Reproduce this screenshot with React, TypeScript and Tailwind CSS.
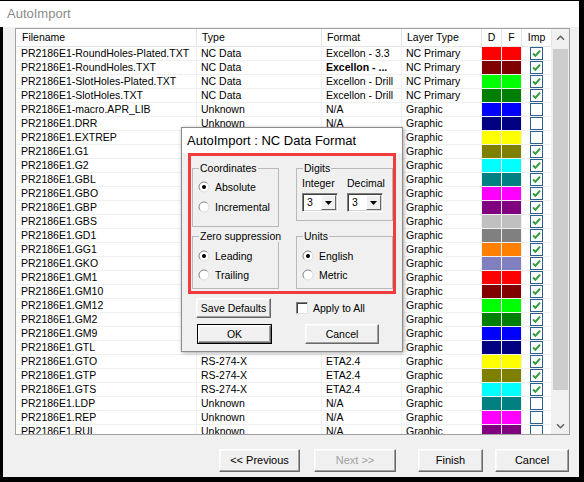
import React from 'react';

type Row = { f: string; t: string; fm: string; lt: string; c: string; imp: boolean; bold?: boolean };

const rows: Row[] = [
  { f: 'PR2186E1-RoundHoles-Plated.TXT', t: 'NC Data', fm: 'Excellon - 3.3', lt: 'NC Primary', c: '#ff0000', imp: true },
  { f: 'PR2186E1-RoundHoles.TXT', t: 'NC Data', fm: 'Excellon - ...', lt: 'NC Primary', c: '#800000', imp: true, bold: true },
  { f: 'PR2186E1-SlotHoles-Plated.TXT', t: 'NC Data', fm: 'Excellon - Drill', lt: 'NC Primary', c: '#00ff00', imp: true },
  { f: 'PR2186E1-SlotHoles.TXT', t: 'NC Data', fm: 'Excellon - Drill', lt: 'NC Primary', c: '#008000', imp: true },
  { f: 'PR2186E1-macro.APR_LIB', t: 'Unknown', fm: 'N/A', lt: 'Graphic', c: '#0000ff', imp: false },
  { f: 'PR2186E1.DRR', t: 'Unknown', fm: 'N/A', lt: 'Graphic', c: '#000080', imp: false },
  { f: 'PR2186E1.EXTREP', t: 'Unknown', fm: 'N/A', lt: 'Graphic', c: '#ffff00', imp: false },
  { f: 'PR2186E1.G1', t: 'RS-274-X', fm: 'ETA2.4', lt: 'Graphic', c: '#808000', imp: true },
  { f: 'PR2186E1.G2', t: 'RS-274-X', fm: 'ETA2.4', lt: 'Graphic', c: '#00ffff', imp: true },
  { f: 'PR2186E1.GBL', t: 'RS-274-X', fm: 'ETA2.4', lt: 'Graphic', c: '#008080', imp: true },
  { f: 'PR2186E1.GBO', t: 'RS-274-X', fm: 'ETA2.4', lt: 'Graphic', c: '#ff00ff', imp: true },
  { f: 'PR2186E1.GBP', t: 'RS-274-X', fm: 'ETA2.4', lt: 'Graphic', c: '#800080', imp: true },
  { f: 'PR2186E1.GBS', t: 'RS-274-X', fm: 'ETA2.4', lt: 'Graphic', c: '#c0c0c0', imp: true },
  { f: 'PR2186E1.GD1', t: 'RS-274-X', fm: 'ETA2.4', lt: 'Graphic', c: '#808080', imp: true },
  { f: 'PR2186E1.GG1', t: 'RS-274-X', fm: 'ETA2.4', lt: 'Graphic', c: '#ff8000', imp: true },
  { f: 'PR2186E1.GKO', t: 'RS-274-X', fm: 'ETA2.4', lt: 'Graphic', c: '#8080c0', imp: true },
  { f: 'PR2186E1.GM1', t: 'RS-274-X', fm: 'ETA2.4', lt: 'Graphic', c: '#ff0000', imp: true },
  { f: 'PR2186E1.GM10', t: 'RS-274-X', fm: 'ETA2.4', lt: 'Graphic', c: '#800000', imp: true },
  { f: 'PR2186E1.GM12', t: 'RS-274-X', fm: 'ETA2.4', lt: 'Graphic', c: '#00ff00', imp: true },
  { f: 'PR2186E1.GM2', t: 'RS-274-X', fm: 'ETA2.4', lt: 'Graphic', c: '#008000', imp: true },
  { f: 'PR2186E1.GM9', t: 'RS-274-X', fm: 'ETA2.4', lt: 'Graphic', c: '#0000ff', imp: true },
  { f: 'PR2186E1.GTL', t: 'RS-274-X', fm: 'ETA2.4', lt: 'Graphic', c: '#000080', imp: true },
  { f: 'PR2186E1.GTO', t: 'RS-274-X', fm: 'ETA2.4', lt: 'Graphic', c: '#ffff00', imp: true },
  { f: 'PR2186E1.GTP', t: 'RS-274-X', fm: 'ETA2.4', lt: 'Graphic', c: '#808000', imp: true },
  { f: 'PR2186E1.GTS', t: 'RS-274-X', fm: 'ETA2.4', lt: 'Graphic', c: '#00ffff', imp: true },
  { f: 'PR2186E1.LDP', t: 'Unknown', fm: 'N/A', lt: 'Graphic', c: '#008080', imp: false },
  { f: 'PR2186E1.REP', t: 'Unknown', fm: 'N/A', lt: 'Graphic', c: '#ff00ff', imp: false },
  { f: 'PR2186E1.RUI', t: 'Unknown', fm: 'N/A', lt: 'Graphic', c: '#800080', imp: false },
];

const btn3d =
  'flex items-center justify-center whitespace-nowrap bg-[#f0f0f0] border border-t-white border-l-white border-b-[#696969] border-r-[#696969] shadow-[inset_-1px_-1px_0_#a0a0a0,inset_1px_1px_0_#f8f8f8]';

function Chevron({ down }: { down?: boolean }) {
  return (
    <svg width="9" height="6" viewBox="0 0 9 6">
      <path
        d={down ? 'M1 1.2 L4.5 4.7 L8 1.2' : 'M1 4.8 L4.5 1.3 L8 4.8'}
        stroke="#606060"
        strokeWidth="1.5"
        fill="none"
      />
    </svg>
  );
}

function ImpBox({ on }: { on: boolean }) {
  return (
    <div className="w-[13px] h-[13px] border border-[#2f5f91] bg-white flex items-center justify-center">
      {on && (
        <svg width="11" height="11" viewBox="0 0 11 11">
          <path d="M2 5.3 L4.4 7.8 L9 2.6" stroke="#2f9a35" strokeWidth="1.9" fill="none" />
        </svg>
      )}
    </div>
  );
}

function ListBox() {
  return (
    <div className="ml-[12px] mt-px w-[555px] h-[407px] border border-[#a0a0a0] bg-white flex overflow-hidden text-[10.5px] leading-none">
      <div className="w-[536px] flex flex-col">
        <div className="h-[18px] shrink-0 flex border-b border-[#e5e5e5]">
          <div className="w-[181px] border-r border-[#e5e5e5] flex items-center pl-[6px]">Filename</div>
          <div className="w-[125px] border-r border-[#e5e5e5] flex items-center pl-[5px]">Type</div>
          <div className="w-[80px] border-r border-[#e5e5e5] flex items-center pl-[5px]">Format</div>
          <div className="w-[80px] border-r border-[#e5e5e5] flex items-center pl-[5px]">Layer Type</div>
          <div className="w-[20px] border-r border-[#e5e5e5] flex items-center justify-center">D</div>
          <div className="w-[20px] border-r border-[#e5e5e5] flex items-center justify-center">F</div>
          <div className="w-[30px] border-r border-[#e5e5e5] flex items-center justify-center">Imp</div>
        </div>
        {rows.map((r) => (
          <div key={r.f} className="h-[14px] shrink-0 flex border-b border-[#f0f0f0]">
            <div className="w-[181px] border-r border-[#f0f0f0] flex items-center pl-[5px] whitespace-nowrap">{r.f}</div>
            <div className="w-[125px] border-r border-[#f0f0f0] flex items-center pl-[4px] whitespace-nowrap">{r.t}</div>
            <div className={`w-[80px] border-r border-[#f0f0f0] flex items-center pl-[4px] whitespace-nowrap ${r.bold ? 'font-bold' : ''}`}>{r.fm}</div>
            <div className="w-[80px] border-r border-[#f0f0f0] flex items-center pl-[4px] whitespace-nowrap">{r.lt}</div>
            <div className="w-[20px] border-r border-[#f0f0f0]" style={{ backgroundColor: r.c }} />
            <div className="w-[20px] border-r border-[#f0f0f0]" style={{ backgroundColor: r.c }} />
            <div className="w-[30px] border-r border-[#f0f0f0] flex items-center justify-center">
              <ImpBox on={r.imp} />
            </div>
          </div>
        ))}
      </div>
      <div className="w-[17px] bg-[#f0f0f0] flex flex-col">
        <div className="h-[17px] shrink-0 flex items-center justify-center">
          <Chevron />
        </div>
        <div className="mt-[3px] mx-[1px] h-[341px] bg-[#cdcdcd]" />
        <div className="flex-1" />
        <div className="h-[17px] shrink-0 flex items-center justify-center">
          <Chevron down />
        </div>
      </div>
    </div>
  );
}

function Radio({ on, label }: { on: boolean; label: string }) {
  return (
    <div className="h-[14px] flex items-center whitespace-nowrap">
      <svg width="12" height="12" viewBox="0 0 12 12" className="shrink-0">
        <circle cx="6" cy="6" r="5" fill="#fff" />
        <path d="M2.46 9.54 A5 5 0 0 1 9.54 2.46" stroke="#808080" strokeWidth="1" fill="none" />
        <path d="M9.54 2.46 A5 5 0 0 1 2.46 9.54" stroke="#dcdcdc" strokeWidth="1" fill="none" />
        {on && <circle cx="6" cy="6" r="2" fill="#000" />}
      </svg>
      <span className="ml-[5px]">{label}</span>
    </div>
  );
}

function Combo() {
  return (
    <div className="w-[36px] h-[19px] flex border border-t-[#808080] border-l-[#808080] border-b-white border-r-white shadow-[inset_1px_1px_0_#404040,inset_-1px_-1px_0_#d4d4d4] bg-white p-[1px]">
      <div className="flex-1 flex items-center pl-[3px]">3</div>
      <div className="w-[15px] flex items-center justify-center bg-[#f0f0f0] border border-t-white border-l-white border-b-[#696969] border-r-[#696969]">
        <svg width="7" height="4" viewBox="0 0 7 4">
          <path d="M0 0 L7 0 L3.5 4 Z" fill="#000" />
        </svg>
      </div>
    </div>
  );
}

const legendCls = 'ml-[6px] px-px leading-[12px] whitespace-nowrap';

function Dialog() {
  return (
    <div className="absolute left-[181px] top-[127px] w-[222px] h-[225px] border border-[#8c8c8c] bg-[#f0f0f0] shadow-[1px_1px_4px_rgba(0,0,0,0.35)] flex flex-col text-[10.5px] leading-none">
      <div className="h-[25px] shrink-0 bg-white flex items-center pl-[5px] text-[13px] whitespace-nowrap">AutoImport : NC Data Format</div>
      <div className="ml-[6px] w-[208px] h-[141px] shrink-0 border-[3px] border-[#f03c3c] pt-[6px] pl-[1px] flex gap-[17px]">
        <div className="w-[87px] flex flex-col gap-[3px]">
          <fieldset className="h-[65px] min-w-0 border border-[#b9b9b9]">
            <legend className={legendCls}>Coordinates</legend>
            <div className="mt-[6px] pl-[5px] flex flex-col gap-[6px]">
              <Radio on label="Absolute" />
              <Radio on={false} label="Incremental" />
            </div>
          </fieldset>
          <fieldset className="h-[59px] min-w-0 border border-[#b9b9b9]">
            <legend className={legendCls}>Zero suppression</legend>
            <div className="mt-[7px] pl-[5px] flex flex-col gap-[5px]">
              <Radio on label="Leading" />
              <Radio on={false} label="Trailing" />
            </div>
          </fieldset>
        </div>
        <div className="w-[97px] flex flex-col gap-[9px]">
          <fieldset className="h-[59px] min-w-0 border border-[#b9b9b9]">
            <legend className={legendCls}>Digits</legend>
            <div className="mt-[3px] pl-[5px] flex gap-[9px]">
              <div className="flex flex-col gap-[4px]">
                <div className="h-[12px] flex items-center">Integer</div>
                <Combo />
              </div>
              <div className="flex flex-col gap-[4px]">
                <div className="h-[12px] flex items-center">Decimal</div>
                <Combo />
              </div>
            </div>
          </fieldset>
          <fieldset className="h-[59px] min-w-0 border border-[#b9b9b9]">
            <legend className={legendCls}>Units</legend>
            <div className="mt-[7px] pl-[5px] flex flex-col gap-[5px]">
              <Radio on label="English" />
              <Radio on={false} label="Metric" />
            </div>
          </fieldset>
        </div>
      </div>
      <div className="mt-[4px] pl-[14px] flex items-center">
        <div className={`w-[75px] h-[20px] ${btn3d}`}>Save Defaults</div>
        <div className="ml-[25px] w-[12px] h-[12px] bg-white border border-t-[#808080] border-l-[#808080] border-b-[#e3e3e3] border-r-[#e3e3e3] shadow-[inset_1px_1px_0_#404040]" />
        <span className="ml-[5px] whitespace-nowrap">Apply to All</span>
      </div>
      <div className="mt-[6px] pl-[15px] flex items-center">
        <div className="w-[75px] h-[20px] border border-black">
          <div className={`w-full h-full ${btn3d}`}>OK</div>
        </div>
        <div className={`ml-[33px] w-[74px] h-[20px] ${btn3d}`}>Cancel</div>
      </div>
    </div>
  );
}

export default function App() {
  return (
    <div className="relative w-[584px] h-[482px] bg-black flex flex-col font-['Liberation_Sans',Arial,sans-serif] text-black overflow-hidden">
      <div className="mt-px mr-[5px] h-[26px] shrink-0 bg-white flex items-center pl-[7px] text-[13px] text-[#8a8a8a]">
        AutoImport
      </div>
      <div className="flex-1 ml-[3px] mr-[5px] mb-[5px] bg-[#f0f0f0] flex flex-col">
        <ListBox />
        <div className="mt-[14px] h-[23px] flex text-[11px] leading-none">
          <div className={`ml-[216px] w-[81px] h-[23px] ${btn3d}`}>&lt;&lt; Previous</div>
          <div className={`ml-[14px] w-[82px] h-[23px] text-[#a0a0a0] ${btn3d}`}>Next &gt;&gt;</div>
          <div className={`ml-[22px] w-[65px] h-[23px] ${btn3d}`}>Finish</div>
          <div className={`ml-[12px] w-[74px] h-[23px] ${btn3d}`}>Cancel</div>
        </div>
      </div>
      <Dialog />
    </div>
  );
}
